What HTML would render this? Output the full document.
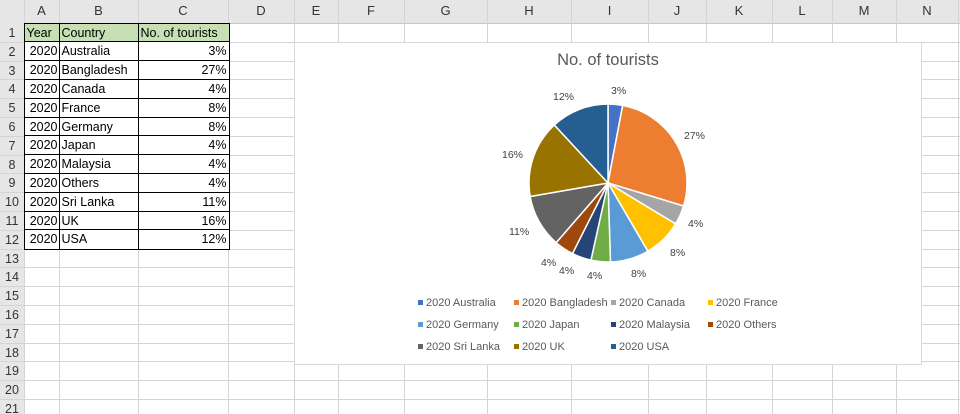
<!DOCTYPE html>
<html><head><meta charset="utf-8"><style>
html,body{margin:0;width:960px;height:414px;overflow:hidden}
body{background:#fff;font-family:"Liberation Sans",sans-serif;position:relative}
.a{position:absolute;white-space:nowrap}
.hd{background:#e6e6e6;color:#333;font-size:13px;text-align:center}
.c{font-size:12.5px;color:#000;line-height:19px}
.lbl{font-size:10.5px;color:#404040;position:absolute}
.lg{font-size:11px;color:#595959;position:absolute;white-space:nowrap}
.lg i{display:inline-block;width:5px;height:5px;margin-right:3px;vertical-align:1px}
</style></head><body>
<div id="g"></div>
<div class="a" style="left:294px;top:42px;width:628px;height:323px;background:#fff;border:1px solid #d9d9d9;box-sizing:border-box"></div>
<div class="a" style="left:294px;top:51px;width:628px;text-align:center;font-size:16.5px;color:#595959">No. of tourists</div>
<svg class="a" style="left:0;top:0" width="960" height="414" id="pie"></svg>
<div class="lbl" style="left:611px;top:85px">3%</div>
<div class="lbl" style="left:684px;top:130px">27%</div>
<div class="lbl" style="left:688px;top:218px">4%</div>
<div class="lbl" style="left:670px;top:247px">8%</div>
<div class="lbl" style="left:631px;top:268px">8%</div>
<div class="lbl" style="left:587px;top:270px">4%</div>
<div class="lbl" style="left:559px;top:265px">4%</div>
<div class="lbl" style="left:541px;top:257px">4%</div>
<div class="lbl" style="left:509px;top:226px">11%</div>
<div class="lbl" style="left:502px;top:149px">16%</div>
<div class="lbl" style="left:553px;top:91px">12%</div>
<div class="lg" style="left:418px;top:297px"><i style="background:#4472c4"></i>2020 Australia</div>
<div class="lg" style="left:514px;top:297px"><i style="background:#ed7d31"></i>2020 Bangladesh</div>
<div class="lg" style="left:611px;top:297px"><i style="background:#a5a5a5"></i>2020 Canada</div>
<div class="lg" style="left:708px;top:297px"><i style="background:#ffc000"></i>2020 France</div>
<div class="lg" style="left:418px;top:319px"><i style="background:#5b9bd5"></i>2020 Germany</div>
<div class="lg" style="left:514px;top:319px"><i style="background:#70ad47"></i>2020 Japan</div>
<div class="lg" style="left:611px;top:319px"><i style="background:#264478"></i>2020 Malaysia</div>
<div class="lg" style="left:708px;top:319px"><i style="background:#9e480e"></i>2020 Others</div>
<div class="lg" style="left:418px;top:341px"><i style="background:#636363"></i>2020 Sri Lanka</div>
<div class="lg" style="left:514px;top:341px"><i style="background:#997300"></i>2020 UK</div>
<div class="lg" style="left:611px;top:341px"><i style="background:#255e91"></i>2020 USA</div>
<script>
var xs=[0,24,59,138,228,294,338,404,487,571,648,706,772,832,896,958],L="ABCDEFGHIJKLMN";
var H=23,R=18.8,h='';
h+='<div class="a hd" style="left:0;top:0;width:960px;height:'+H+'px;border-bottom:1px solid #c8c8c8"></div>';
h+='<div class="a hd" style="left:0;top:0;width:24px;height:414px;border-right:1px solid #c8c8c8"></div>';
for(var i=1;i<xs.length;i++){h+='<div class="a" style="left:'+xs[i]+'px;top:0;width:1px;height:414px;background:#d4d4d4"></div>';
if(i<15)h+='<div class="a hd" style="left:'+xs[i]+'px;top:3px;width:'+(xs[i+1]-xs[i])+'px;background:none">'+L[i-1]+'</div>';}
for(var r=1;r<=21;r++){var y=H+(r-1)*R;h+='<div class="a" style="left:0;top:'+(y+R)+'px;width:960px;height:1px;background:#d4d4d4"></div>';
h+='<div class="a hd" style="left:0;top:'+(y+1)+'px;width:24px;background:none;font-size:12.5px;line-height:19px">'+r+'</div>';}
var d=[["Year","Country","No. of tourists"],["2020","Australia","3%"],["2020","Bangladesh","27%"],["2020","Canada","4%"],["2020","France","8%"],["2020","Germany","8%"],["2020","Japan","4%"],["2020","Malaysia","4%"],["2020","Others","4%"],["2020","Sri Lanka","11%"],["2020","UK","16%"],["2020","USA","12%"]];
for(r=0;r<12;r++){var y=H+r*R;for(var c=0;c<3;c++){var al=(r>0&&c!=1)?'right':'left';
h+='<div class="a c" style="left:'+xs[c+1]+'px;top:'+y+'px;width:'+(xs[c+2]-xs[c+1]-4)+'px;padding:0 2px;height:'+R+'px;border:1px solid #000;margin:-0.5px;text-align:'+al+';background:'+(r==0?'#c6e0b4':'#fff')+'">'+d[r][c]+'</div>';}}
document.getElementById('g').innerHTML=h;
var v=[3,27,4,8,8,4,4,4,11,16,12],col=["#4472c4","#ed7d31","#a5a5a5","#ffc000","#5b9bd5","#70ad47","#264478","#9e480e","#636363","#997300","#255e91"];
var cx=608,cy=183,rr=79,s=0,t=101,p='';
for(i=0;i<v.length;i++){var a0=s/t*2*Math.PI,a1=(s+v[i])/t*2*Math.PI;s+=v[i];
var x0=cx+rr*Math.sin(a0),y0=cy-rr*Math.cos(a0),x1=cx+rr*Math.sin(a1),y1=cy-rr*Math.cos(a1);
p+='<path d="M'+cx+' '+cy+'L'+x0+' '+y0+'A'+rr+' '+rr+' 0 '+((a1-a0)>Math.PI?1:0)+' 1 '+x1+' '+y1+'Z" fill="'+col[i]+'" stroke="#fff" stroke-width="1.5"/>';}
document.getElementById('pie').innerHTML=p;
</script>
</body></html>
